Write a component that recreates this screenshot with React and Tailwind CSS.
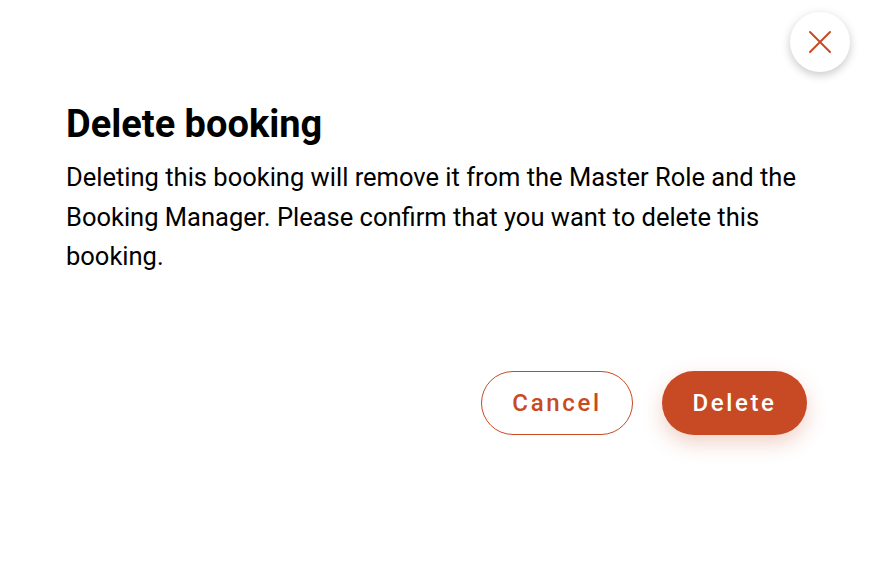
import React from 'react';

const CloseIcon = () => (
  <svg width="24" height="24" viewBox="0 0 24 24" fill="none" stroke="#c84a24" strokeWidth="2" strokeLinecap="round">
    <path d="M2 2L22 22M22 2L2 22" />
  </svg>
);

export default function App() {
  return (
    <div className="relative w-[872px] h-[566px] bg-white overflow-hidden font-['Roboto',sans-serif]">
      {/* Close button */}
      <button
        className="absolute top-[12px] left-[790px] w-[60px] h-[60px] rounded-full bg-white flex items-center justify-center shadow-[0_3px_10px_rgba(0,0,0,0.22)]"
        aria-label="Close"
      >
        <CloseIcon />
      </button>

      <div className="pl-[66px] pr-[60px] pt-[101px]">
        <h1 className="text-[38px] font-bold text-black leading-[46px]">Delete booking</h1>
        <p className="mt-[11px] text-[25.5px] leading-[39.5px] text-black max-w-[750px]">
          Deleting this booking will remove it from the Master Role and the Booking Manager. Please confirm that you
          want to delete this booking.
        </p>

        <div className="mt-[94px] flex justify-end gap-[29px] pr-[5px]">
          <button className="w-[152px] h-[64px] rounded-full border border-[#c84a24] text-[#c84a24] text-[24px] font-medium tracking-[0.11em] bg-white">
            Cancel
          </button>
          <button className="w-[145px] h-[64px] rounded-full bg-[#c84a24] text-white text-[24px] font-medium tracking-[0.11em] shadow-[0_8px_20px_rgba(200,74,36,0.25)]">
            Delete
          </button>
        </div>
      </div>
    </div>
  );
}
